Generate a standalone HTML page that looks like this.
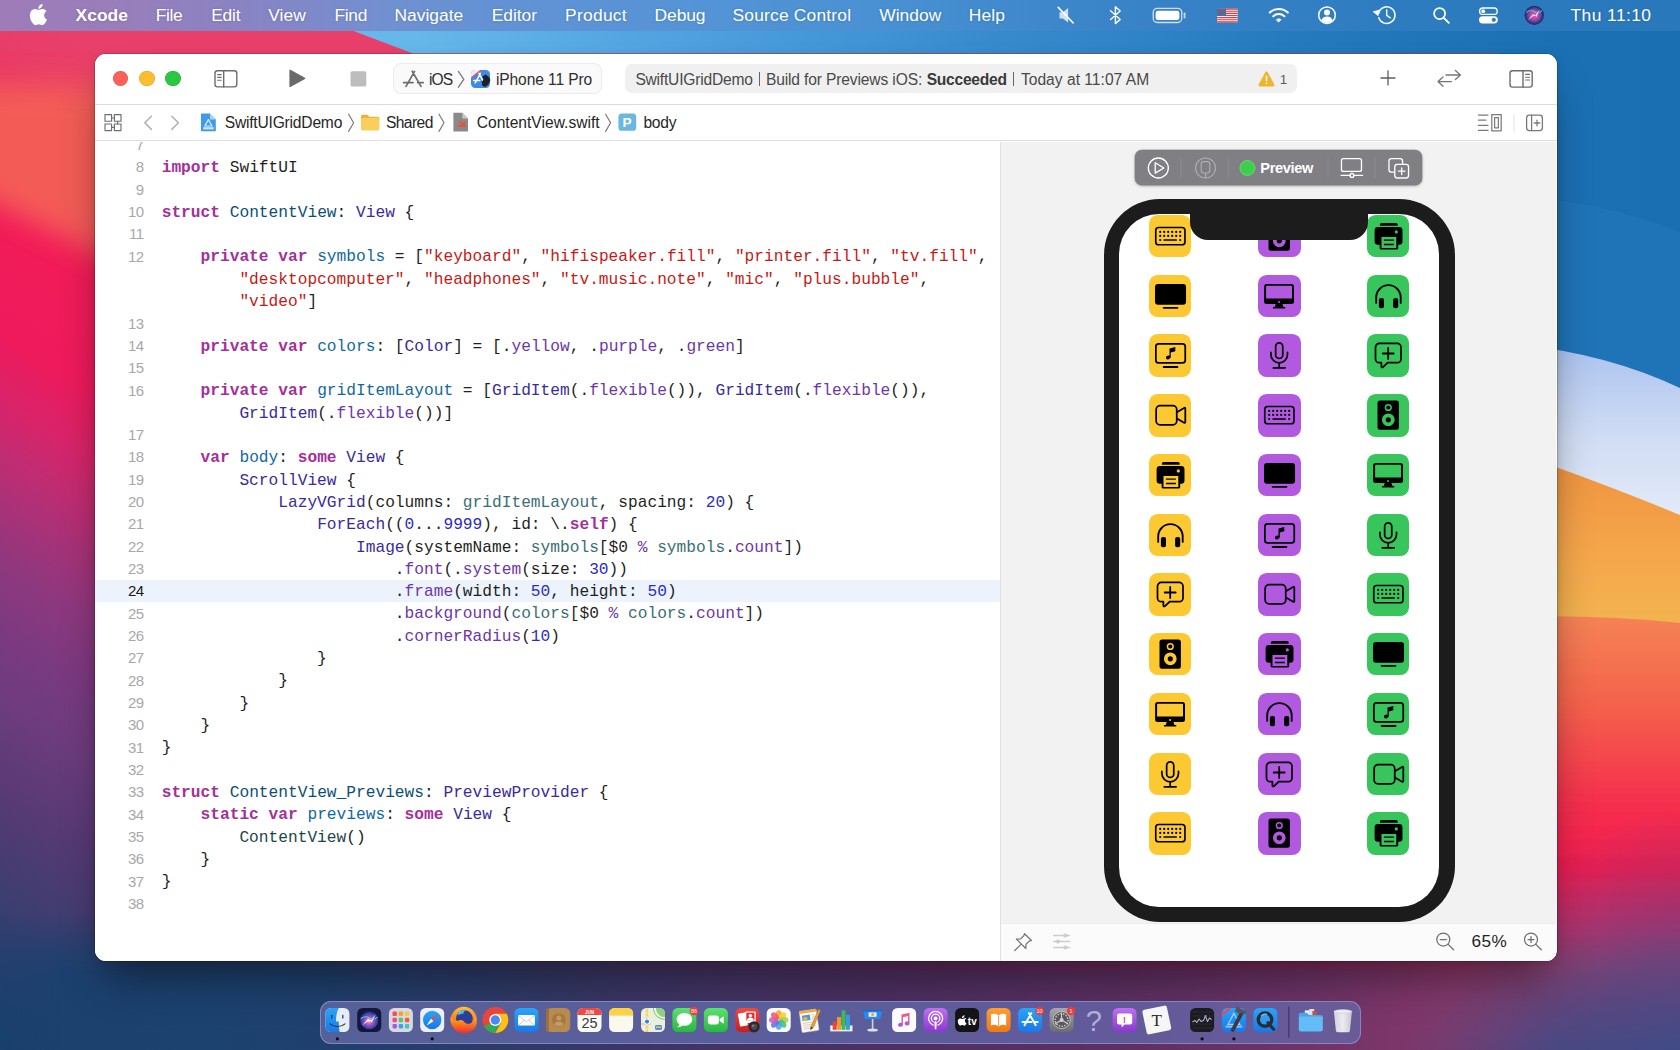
<!DOCTYPE html>
<html lang="en">
<head>
<meta charset="utf-8">
<title>Xcode — SwiftUIGridDemo</title>
<style>
*{box-sizing:border-box;margin:0;padding:0}
html,body{width:1680px;height:1050px;overflow:hidden;background:#1b6fb3;font-family:"Liberation Sans",sans-serif;}
#wall{position:absolute;left:0;top:0;width:1680px;height:1050px;display:block}
/* menu bar */
#menubar{position:absolute;left:0;top:0;width:1680px;height:31px;
 background:linear-gradient(90deg,#9e7cb8 0,#987eba 120px,#8c82c2 220px,#8088c8 300px,#7290d0 380px,#6492d4 480px,#5494d6 700px,#4890d2 900px,#3a84c8 1100px,#2e7cc0 1400px,#2a78bc 1680px);
 color:#fff;font-size:17px;white-space:nowrap}
#menubar span{position:absolute;top:0;line-height:31px;text-shadow:0 0 3px rgba(0,0,0,.18)}
#menubar svg{position:absolute}
/* window */
#win{position:absolute;left:94.700px;top:53.700px;width:1462px;height:907px;border-radius:11px;background:#fff;
 box-shadow:0 0 0 .6px rgba(0,0,0,.30),0 26px 44px -10px rgba(0,0,0,.46),0 2px 8px rgba(0,0,0,.10);overflow:hidden}
#toolbar{position:absolute;left:0;top:0;width:100%;height:51px;background:#fff;border-bottom:1px solid #dcdcdc}
#jump{position:absolute;left:0;top:51px;width:100%;height:36px;background:#fff;border-bottom:1px solid #dedede;font-size:15.6px;color:#262626;white-space:nowrap}
#jump span{position:absolute;top:0;line-height:35px}
.abs{position:absolute}
.tl{position:absolute;top:17px;width:15.8px;height:15.8px;border-radius:50%}
.pill{position:absolute;top:11px;height:29px;border-radius:7px}
/* editor */
#editor{position:absolute;left:0;top:88px;width:905px;height:819px;background:#fff;overflow:hidden}
#rows{position:absolute;left:0;top:-8.700px;width:100%}
.row{position:relative;height:22.333px;line-height:22.333px;white-space:pre;font-family:"Liberation Mono",monospace;font-size:16.2px;color:#1f1f1f}
.row.cur{background:#ecf3fd}
.row.cur .ln{color:#1a1a1a}
.ln{position:absolute;left:0;top:.900px;width:49.400px;text-align:right;font-family:"Liberation Sans",sans-serif;font-size:15px;color:#a8a8a8;letter-spacing:-.5px;padding-right:.5px}
.cd{position:absolute;left:67px;top:1.600px}
.k{color:#a3309a;font-weight:bold}
.t{color:#0b4f79}.d{color:#0f68a0}.c{color:#3b2b9a}.f{color:#6c36a9}.s{color:#c41a16}.n{color:#2a2cc4}.p{color:#3a6e74}.q{color:#1c464a}
/* canvas */
#canvas{position:absolute;left:905px;top:88px;width:556px;height:819px;background:#f2f2f2;border-left:1px solid #e0e0e0}
#cbar{position:absolute;left:0;bottom:0;width:100%;height:36.500px;background:#fbfbfb;box-shadow:0 -1px 0 #ececec}
#ptool{position:absolute;left:134.200px;top:8px;width:286.700px;height:35.400px;border-radius:7px;background:#7f7f84;box-shadow:0 1px 3px rgba(0,0,0,.35),0 0 0 .5px rgba(0,0,0,.25)}
#phone{position:absolute;left:103px;top:57.800px;width:351.800px;height:722.900px;border-radius:56px;background:#1c1c1c}
#screen{position:absolute;left:15px;top:14.200px;width:320.500px;height:693.300px;border-radius:40px;background:#fff;overflow:hidden}
#notch{position:absolute;left:71px;top:-1px;width:178px;height:27px;background:#1c1c1c;border-radius:0 0 18px 18px}
.tile{position:absolute;width:42.3px;height:42.3px;border-radius:8.6px}
.tile svg{position:absolute;left:0;top:0;width:42.3px;height:42.3px;display:block}
.y{background:#fdc932}.pu{background:#b15adf}.g{background:#37c55c}
/* dock */
#dock{position:absolute;left:319.500px;top:1001px;width:1041.500px;height:42.500px;border-radius:11px;background:linear-gradient(90deg,#566098 0,#5a5e9c 40%,#625a9a 75%,#6a5a98 100%);box-shadow:inset 0 0 0 1px rgba(160,168,224,.55)}
</style>
</head>
<body>
<svg id="wall" viewBox="0 0 1680 1050">
<!--WALL0-->
<defs>
 <linearGradient id="gL" x1="0" y1="0" x2="-600" y2="1050" gradientUnits="userSpaceOnUse">
  <stop offset="0.0000" stop-color="#e8406a"/><stop offset="0.0359" stop-color="#e83c68"/><stop offset="0.1544" stop-color="#f21c58"/><stop offset="0.2405" stop-color="#ee1a5c"/><stop offset="0.2908" stop-color="#d8246a"/><stop offset="0.3267" stop-color="#c02c72"/><stop offset="0.3626" stop-color="#a83278"/><stop offset="0.4056" stop-color="#8e387e"/><stop offset="0.4631" stop-color="#783a80"/><stop offset="0.5026" stop-color="#6e3c7e"/><stop offset="0.5744" stop-color="#563a74"/><stop offset="0.6462" stop-color="#3c3e70"/><stop offset="0.7072" stop-color="#20406e"/><stop offset="0.7610" stop-color="#14406c"/><stop offset="1.0051" stop-color="#14406c"/>
 </linearGradient>
 <linearGradient id="gT" x1="413" y1="0" x2="1680" y2="0" gradientUnits="userSpaceOnUse">
  <stop offset="0" stop-color="#66b8ea"/><stop offset=".2" stop-color="#50a2e0"/>
  <stop offset=".45" stop-color="#388cce"/><stop offset=".7" stop-color="#257abe"/>
  <stop offset=".9" stop-color="#1b70b4"/><stop offset="1" stop-color="#1a6eb2"/>
 </linearGradient>
 <linearGradient id="gB" x1="0" y1="0" x2="1680" y2="0" gradientUnits="userSpaceOnUse">
  <stop offset="0" stop-color="#1c406e"/><stop offset=".12" stop-color="#1c4270"/>
  <stop offset=".20" stop-color="#20406e"/><stop offset=".27" stop-color="#2a3c6a"/>
  <stop offset=".34" stop-color="#363866"/><stop offset=".42" stop-color="#423464"/>
  <stop offset=".52" stop-color="#4c3062"/><stop offset=".66" stop-color="#5c3062"/>
  <stop offset=".78" stop-color="#6e3468"/><stop offset=".89" stop-color="#8e386a"/>
  <stop offset=".97" stop-color="#b8386e"/><stop offset="1" stop-color="#c0386e"/>
 </linearGradient>
 <linearGradient id="gBm" x1="0" y1="915" x2="0" y2="975" gradientUnits="userSpaceOnUse">
  <stop offset="0" stop-color="#fff" stop-opacity="0"/><stop offset="1" stop-color="#fff" stop-opacity="1"/>
 </linearGradient>
 <linearGradient id="gBh" x1="-40" y1="0" x2="60" y2="0" gradientUnits="userSpaceOnUse"><stop offset="0" stop-color="#000"/><stop offset="1" stop-color="#000" stop-opacity="0"/></linearGradient>
 <mask id="mB"><rect x="0" y="900" width="1680" height="150" fill="url(#gBm)"/><rect x="0" y="900" width="1680" height="150" fill="url(#gBh)"/></mask>
 <linearGradient id="gLav" x1="0" y1="350" x2="0" y2="520" gradientUnits="userSpaceOnUse">
  <stop offset="0" stop-color="#adc4f0"/><stop offset=".5" stop-color="#d0dcf4"/><stop offset="1" stop-color="#e4ebf8"/>
 </linearGradient>
 <linearGradient id="gOr" x1="0" y1="465" x2="0" y2="625" gradientUnits="userSpaceOnUse">
  <stop offset="0" stop-color="#f09440"/><stop offset=".6" stop-color="#f5a84c"/><stop offset="1" stop-color="#f2b450"/>
 </linearGradient>
 <linearGradient id="gRd" x1="0" y1="618" x2="0" y2="1050" gradientUnits="userSpaceOnUse">
  <stop offset="0" stop-color="#f58254"/><stop offset=".2" stop-color="#f4624c"/>
  <stop offset=".42" stop-color="#f5304e"/><stop offset=".58" stop-color="#f41c50"/>
  <stop offset=".72" stop-color="#cc2e68"/><stop offset=".81" stop-color="#96406e"/>
  <stop offset=".90" stop-color="#6a4478"/><stop offset="1" stop-color="#464a82"/>
 </linearGradient>
 <radialGradient id="gBR" cx="1700" cy="1070" r="260" gradientUnits="userSpaceOnUse">
  <stop offset="0" stop-color="#3c4c8a"/><stop offset=".45" stop-color="#484884" stop-opacity=".8"/><stop offset="1" stop-color="#50407a" stop-opacity="0"/>
 </radialGradient>
 <linearGradient id="gRm" x1="1400" y1="0" x2="1560" y2="0" gradientUnits="userSpaceOnUse"><stop offset="0" stop-color="#fff" stop-opacity="0"/><stop offset="1" stop-color="#fff"/></linearGradient>
 <mask id="mR"><rect x="1300" y="0" width="380" height="1050" fill="url(#gRm)"/></mask>
 <filter id="b12" x="-20%" y="-20%" width="140%" height="140%"><feGaussianBlur stdDeviation="14"/></filter>
 <filter id="b1"><feGaussianBlur stdDeviation=".6"/></filter>
</defs>
<rect width="1680" height="1050" fill="url(#gL)"/>
<path d="M-60 84 L260 84 L260 333 L-60 176 Z" fill="#f45e56" filter="url(#b12)" opacity=".95"/>
<!-- blue top/right -->
<path d="M351 30 L1680 30 L1680 700 L1500 700 L1500 53.5 L413 53.5 Z" fill="url(#gT)"/>
<!-- bottom strip -->
<rect x="0" y="900" width="1680" height="150" fill="url(#gB)" mask="url(#mB)"/>
<g mask="url(#mR)">
<path d="M1300 195 L1500 195 Q1600 200 1680 232 L1680 420 L1300 420 Z" fill="#2176b8" opacity=".75"/>
<path d="M1300 343 L1500 343 Q1600 350 1680 388 L1680 560 L1300 560 Z" fill="url(#gLav)" filter="url(#b1)"/>
<path d="M1300 440 L1500 448 Q1580 474 1680 515 L1680 660 L1300 660 Z" fill="url(#gOr)" filter="url(#b1)"/>
<path d="M1300 617 L1500 617 Q1600 614 1680 623 L1680 1050 L1300 1050 Z" fill="url(#gRd)" filter="url(#b1)"/>
</g>
<rect x="1300" y="760" width="380" height="290" fill="url(#gBR)" opacity=".7"/>
<!--WALL1-->
</svg>

<div id="menubar">
<svg style="left:28.5px;top:3.6px" width="19" height="21" viewBox="2 0 20.2 24"><path fill="#fff" d="M12.152 6.896c-.948 0-2.415-1.078-3.96-1.04-2.04.027-3.91 1.183-4.961 3.014-2.117 3.675-.546 9.103 1.519 12.09 1.013 1.454 2.208 3.09 3.792 3.039 1.52-.065 2.09-.987 3.935-.987 1.831 0 2.35.987 3.96.948 1.637-.026 2.676-1.48 3.676-2.948 1.156-1.688 1.636-3.325 1.662-3.415-.039-.013-3.182-1.221-3.22-4.857-.026-3.04 2.48-4.494 2.597-4.559-1.429-2.09-3.623-2.324-4.39-2.376-2-.156-3.675 1.09-4.61 1.09zM15.53 3.83c.843-1.012 1.4-2.427 1.245-3.83-1.207.052-2.662.805-3.532 1.818-.78.896-1.454 2.338-1.273 3.714 1.338.104 2.715-.688 3.559-1.701"/></svg>
<span style="left:75.5px;font-size:17.4px;font-weight:bold;letter-spacing:0.06px;">Xcode</span>
<span style="left:155.7px;font-size:17.4px;font-weight:normal;letter-spacing:-0.31px;">File</span>
<span style="left:211.2px;font-size:17.4px;font-weight:normal;letter-spacing:-0.17px;">Edit</span>
<span style="left:268.2px;font-size:17.4px;font-weight:normal;letter-spacing:0.05px;">View</span>
<span style="left:334.5px;font-size:17.4px;font-weight:normal;letter-spacing:-0.34px;">Find</span>
<span style="left:394.5px;font-size:17.4px;font-weight:normal;letter-spacing:0.02px;">Navigate</span>
<span style="left:491.7px;font-size:17.4px;font-weight:normal;letter-spacing:-0.02px;">Editor</span>
<span style="left:565.0px;font-size:17.4px;font-weight:normal;letter-spacing:0.29px;">Product</span>
<span style="left:654.5px;font-size:17.4px;font-weight:normal;letter-spacing:-0.05px;">Debug</span>
<span style="left:732.5px;font-size:17.4px;font-weight:normal;letter-spacing:0.20px;">Source Control</span>
<span style="left:879.2px;font-size:17.4px;font-weight:normal;letter-spacing:0.04px;">Window</span>
<span style="left:968.7px;font-size:17.4px;font-weight:normal;letter-spacing:0.13px;">Help</span>
<span style="left:1570.5px;font-size:17.4px;font-weight:normal;letter-spacing:0.44px;">Thu 11:10</span>
<svg style="left:1040px;top:0" width="520" height="31" viewBox="1040 0 520 31" fill="none" stroke="#fff" stroke-width="1.5" stroke-linecap="round" stroke-linejoin="round">
 <!-- mute -->
 <path d="M1059.5 12.2h3.4l5.2-4.2v14.6l-5.2-4.2h-3.4z" fill="#fff" stroke="none" opacity=".75"/>
 <path d="M1058.2 7.4l15 15.6" stroke-width="1.6"/>
 <!-- bluetooth -->
 <path d="M1110.6 10.8l9.6 8.6-4.8 4.2V6.8l4.8 4.2-9.6 8.6" stroke-width="1.4"/>
 <!-- battery -->
 <rect x="1153.2" y="8.3" width="28.6" height="14.2" rx="4.2" stroke-width="1.3" opacity=".75"/>
 <rect x="1155.6" y="10.7" width="23.8" height="9.4" rx="2.3" fill="#fff" stroke="none"/>
 <path d="M1184.6 13.3v4.2" stroke-width="1.8" opacity=".7"/>
 <!-- flag -->
 <g stroke="none"><rect x="1217" y="8.6" width="20.6" height="13.8" fill="#f4f2f2"/>
 <path d="M1217 8.6h20.6v1.06H1217zM1217 10.72h20.6v1.06H1217zM1217 12.84h20.6v1.06H1217zM1217 14.96h20.6v1.06H1217zM1217 17.08h20.6v1.06H1217zM1217 19.2h20.6v1.06H1217zM1217 21.32h20.6v1.08H1217z" fill="#d8404c"/>
 <rect x="1217" y="8.6" width="9" height="7.4" fill="#5a6898"/></g>
 <!-- wifi -->
 <path d="M1269.8 12.6a13.2 13.2 0 0 1 18 0" stroke-width="2.1"/>
 <path d="M1273.2 16.2a8.4 8.4 0 0 1 11.2 0" stroke-width="2.1"/>
 <path d="M1276.6 19.6a3.4 3.4 0 0 1 4.4 0l-2.2 2.3z" fill="#fff" stroke-width=".8"/>
 <!-- user -->
 <circle cx="1327" cy="15.2" r="8.3" stroke-width="1.5"/>
 <circle cx="1327" cy="12.4" r="3" fill="#fff" stroke="none"/>
 <path d="M1321.4 20.6a5.8 5.4 0 0 1 11.2 0a8 8 0 0 1-11.2 0z" fill="#fff" stroke="none"/>
 <!-- time machine -->
 <path d="M1378.6 13.2a8.3 8.3 0 1 1 .2 4.6" stroke-width="1.5"/>
 <path d="M1372.6 11.6l5.6 4.6 2-6.6z" fill="#fff" stroke="none"/>
 <path d="M1386.7 10v5.4l3.6 2.4" stroke-width="1.4"/>
 <!-- search -->
 <circle cx="1439.6" cy="13.6" r="5.5" stroke-width="1.7"/><path d="M1443.8 17.8l5 5" stroke-width="1.9"/>
 <!-- control center -->
 <rect x="1479.6" y="8" width="17.6" height="6.4" rx="3.2" stroke-width="1.3"/><circle cx="1483.2" cy="11.2" r="1.9" fill="#fff" stroke="none"/>
 <rect x="1479" y="16.2" width="18.8" height="7.2" rx="3.6" fill="#fff" stroke="none"/><circle cx="1493.8" cy="19.8" r="2.1" fill="#3c7ab4" stroke="none"/>
 <!-- siri -->
 <defs><radialGradient id="siri" cx=".5" cy=".5" r=".5"><stop offset="0" stop-color="#e05a9a"/><stop offset=".45" stop-color="#b04aa8"/><stop offset=".8" stop-color="#3a3c90"/><stop offset="1" stop-color="#20205a"/></radialGradient></defs>
 <circle cx="1534.3" cy="15.3" r="9.6" fill="url(#siri)" stroke="none"/>
 <path d="M1527.8 20.4l5.4-6.4 1.4 2.4 5.2-7.2-3.4 7.8-1.6-2.4z" fill="#fff" stroke="none" opacity=".95"/>
 <path d="M1526.6 12.2q4 -3.2 8 -.4t7 -1" stroke="#5ad0e0" stroke-width="1.1" opacity=".8"/>
</svg>

</div>

<div id="win">
 <div id="toolbar">
  <div class="tl" style="left:18px;background:#fe5f57;box-shadow:inset 0 0 0 .6px rgba(0,0,0,.14)"></div>
  <div class="tl" style="left:44.2px;background:#febc2e;box-shadow:inset 0 0 0 .6px rgba(0,0,0,.14)"></div>
  <div class="tl" style="left:70.4px;background:#28c840;box-shadow:inset 0 0 0 .6px rgba(0,0,0,.14)"></div>
  <div class="pill" style="left:299.5px;top:10.5px;width:207px;height:28.5px;background:#fafafa;box-shadow:0 0 0 1px #ebebeb"></div>
  <div class="pill" style="left:530px;top:10.5px;width:672px;height:28.5px;background:#f0f0f0"></div>
  <svg class="abs" style="left:0;top:0" width="1461" height="51" viewBox="95 54 1461 51" fill="none" stroke="#6c6c6c" stroke-width="1.4" stroke-linecap="round" stroke-linejoin="round">
   <!-- sidebar toggle -->
   <rect x="215" y="70.7" width="21.8" height="16.2" rx="2.6"/><path d="M223.7 70.7v16.2" /><path d="M217.6 74.6h3.6M217.6 77.4h3.6M217.6 80.2h3.6" stroke-width="1.1"/>
   <!-- play -->
   <path d="M289.4 70.2v16.4a.7.7 0 0 0 1 .5l14.6-8.1a.7.7 0 0 0 0-1.2l-14.6-8.1a.7.7 0 0 0-1 .5z" fill="#6a6a6a" stroke="none"/>
   <!-- stop -->
   <rect x="350.5" y="71.2" width="15.8" height="15.2" rx="1.6" fill="#bdbdbd" stroke="none"/>
   <!-- scheme A icon -->
   <g stroke="#6e6e6e" stroke-width="1.7"><path d="M414.6 71.4l-8.6 15M412.2 71.2l8.8 15.2M403.6 82.6h9.4M417.6 82.6h5.6"/></g>
   <!-- chevron -->
   <path d="M458.4 71.4l5.4 7.9-5.4 7.9" stroke="#7a7a7a" stroke-width="1.3"/>
   <!-- simulator icon -->
   <g stroke="none"><rect x="471" y="70" width="19" height="18" rx="4.2" fill="#3f8ae6"/>
   <path d="M471 78l10-8h-5.8a4.2 4.2 0 0 0-4.2 4.2z" fill="#e9eefb"/><path d="M472 77.4l8.6-6.8" stroke="#e05a6a" stroke-width="1.6"/>
   <path d="M480.4 73.4l-5.2 9.6M479 73.4l5 9.6M473.8 80.6h6" stroke="#fff" stroke-width="1.5" stroke-linecap="round"/>
   <path d="M482.2 76.8l3.4-2.4 3.4 2.6 1.4 3-2 4.6-3.2 2.4-3-1.6-.4-3.6 1.8-2.2z" fill="#1f1f22"/></g>
   <!-- warning -->
   <path d="M1265.6 72.4a1 1 0 0 1 1.8 0l6.6 12.2a1 1 0 0 1-.9 1.5h-13.2a1 1 0 0 1-.9-1.5z" fill="#f0b429" stroke="#f0b429" stroke-width=".8"/>
   <path d="M1266.5 76.2v4.6" stroke="#fff" stroke-width="1.5"/><circle cx="1266.5" cy="83.3" r=".9" fill="#fff" stroke="none"/>
   <!-- plus -->
   <path d="M1381 78h14M1388 71v14" stroke="#5c5c5c" stroke-width="1.3"/>
   <!-- arrows -->
   <path d="M1446 75h14.4M1455.4 70.4l5 4.6-5 4.6M1451.4 81.6H1438M1443 77l-5 4.6 5 4.6" stroke="#757575" stroke-width="1.3"/>
   <!-- right sidebar -->
   <rect x="1510" y="70.7" width="22.2" height="16.4" rx="2.6"/><path d="M1523 70.7v16.4"/><path d="M1525.6 74.4h4M1525.6 77.2h4M1525.6 80h4" stroke-width="1.1"/>
  </svg>
  <div style="position:absolute;left:0;top:0;font-size:15.4px;color:#3c3c3c;white-space:nowrap" id="tbtext">
  <span style="left:334.2px;font-size:15.6px;font-weight:normal;letter-spacing:-0.80px;top:11px;line-height:29px;position:absolute;color:#2e2e2e">iOS</span>
  <span style="left:401.2px;font-size:15.6px;font-weight:normal;letter-spacing:-0.11px;top:11px;line-height:29px;position:absolute;color:#2e2e2e">iPhone 11 Pro</span>
  <span style="left:540.7px;font-size:15.6px;font-weight:normal;letter-spacing:-0.21px;top:11px;line-height:29px;position:absolute;color:#4a4a4a">SwiftUIGridDemo</span>
  <span style="position:absolute;left:664.3px;top:18.500px;width:1.200px;height:13.500px;background:#666"></span>
  <span style="left:671.2px;font-size:15.6px;font-weight:normal;letter-spacing:-0.14px;top:11px;line-height:29px;position:absolute;color:#4a4a4a">Build for Previews iOS:</span>
  <span style="left:832.0px;font-size:15.6px;font-weight:bold;letter-spacing:-0.26px;top:11px;line-height:29px;position:absolute;color:#3a3a3a">Succeeded</span>
  <span style="position:absolute;left:918.2px;top:18.500px;width:1.200px;height:13.500px;background:#666"></span>
  <span style="left:926.2px;font-size:15.6px;font-weight:normal;letter-spacing:0.02px;top:11px;line-height:29px;position:absolute;color:#4a4a4a">Today at 11:07 AM</span>
  <span style="left:1185.0px;font-size:13.4px;font-weight:normal;letter-spacing:-0.80px;top:11.5px;line-height:29px;position:absolute;color:#5c5c5c">1</span>
  </div>

 </div>
 <div id="jump">
  <svg class="abs" style="left:0;top:0" width="1461" height="36" viewBox="95 105 1461 36" fill="none" stroke="#7a7a7a" stroke-width="1.2" stroke-linecap="round" stroke-linejoin="round">
   <!-- related items grid -->
   <g stroke="#6e6e6e" stroke-width="1.15"><rect x="105" y="114.6" width="6.6" height="6.6"/><rect x="114.4" y="114.6" width="6.6" height="6.6"/><rect x="105" y="124" width="6.6" height="6.6"/><rect x="114.4" y="124" width="6.6" height="6.6"/><path d="M111.6 118h2.8M117.6 121.2v2.8M111.6 127.4h2.8"/></g>
   <path d="M151.4 116.2l-6.6 6.6 6.6 6.6" stroke="#b0b0b0" stroke-width="1.5"/>
   <path d="M171.8 116.2l6.6 6.6-6.6 6.6" stroke="#b0b0b0" stroke-width="1.5"/>
   <!-- project doc -->
   <g stroke="none"><path d="M201 113.6h9l5.8 5.8v11.8h-14.8z" fill="#3f9be8"/><path d="M210 113.6v5.8h5.8z" fill="#a8d2f7"/>
   <path d="M208.4 119.6l-3.6 6.4h7.2z" fill="none" stroke="#dff0ff" stroke-width="1.2"/><rect x="203.2" y="127.2" width="10.4" height="2.2" fill="#d0e8fb"/></g>
   <path d="M348.6 114.2l5 8.6-5 8.6" stroke="#7c7c7c" stroke-width="1.2"/>
   <!-- folder -->
   <g stroke="none"><path d="M361 116.4a1.6 1.6 0 0 1 1.6-1.6h4.8l2 2h8.4a1.6 1.6 0 0 1 1.6 1.6v2H361z" fill="#e8b23c"/><rect x="361" y="117.8" width="18.4" height="12.8" rx="1.6" fill="#f8cf5a"/></g>
   <path d="M439 114.2l5 8.6-5 8.6" stroke="#7c7c7c" stroke-width="1.2"/>
   <!-- swift file -->
   <g stroke="none"><path d="M453.4 112.8h9l5.6 5.6v13.2h-14.6z" fill="#8a8a8a"/><path d="M462.4 112.8v5.6h5.6z" fill="#c8c8c8"/>
   <path d="M456 124.2c2.400 2.600 5.600 3.800 8 2.600 1.200-.6 1.800 1.200 1.800 1.200s.4-2.400-.8-3.800c.8-2 -.6-4.200-.6-4.200s.2 2.200-.8 3.200c-1.600-1-3.600-2.800-4.600-4 .8 1.400 2.200 3.200 3.400 4.400-1.600-.8-3.800-2.400-5.200-3.600 1.200 1.800 3 3.600 4.600 4.800-1.800.6-4 .2-5.800-.6z" fill="#e8503a"/></g>
   <path d="M605.600 114.200l5 8.600-5 8.600" stroke="#7c7c7c" stroke-width="1.200"/>
   <!-- P icon -->
   <rect x="618.400" y="113.400" width="17.800" height="17.400" rx="3.400" fill="#6cb6e2" stroke="none"/>
   <!-- right icons -->
   <g stroke="#7a7a7a" stroke-width="1.25"><path d="M1478.400 115h9.600M1478.400 120h7.600M1478.400 125.300h9.600M1478.400 130.400h9.600"/><rect x="1491.800" y="114.600" width="9.400" height="16.200"/><rect x="1494.600" y="117.600" width="3.800" height="10.200"/></g>
   <path d="M1514 114.400v16.800" stroke="#e2e2e2" stroke-width="1"/>
   <g stroke="#7a7a7a" stroke-width="1.3"><rect x="1526.600" y="115.200" width="15.800" height="15.400" rx="2.800"/><path d="M1531.600 115.200v15.400M1534.200 123h5.600M1537 120.200v5.600"/></g>
  </svg>
  <span style="left:527.7px;font-size:13.6px;font-weight:bold;letter-spacing:0.42px;color:#fff;line-height:35px">P</span>
  <span style="left:130.0px;font-size:15.6px;font-weight:normal;letter-spacing:-0.20px;">SwiftUIGridDemo</span>
  <span style="left:291.2px;font-size:15.6px;font-weight:normal;letter-spacing:-0.55px;">Shared</span>
  <span style="left:382.0px;font-size:15.6px;font-weight:normal;letter-spacing:0.01px;">ContentView.swift</span>
  <span style="left:548.7px;font-size:15.6px;font-weight:normal;letter-spacing:-0.21px;">body</span>

 </div>
 <div id="editor"><div id="rows">
<div class="row"><span class="ln">7</span><span class="cd"></span></div>
<div class="row"><span class="ln">8</span><span class="cd"><span class="k">import</span> SwiftUI</span></div>
<div class="row"><span class="ln">9</span><span class="cd"></span></div>
<div class="row"><span class="ln">10</span><span class="cd"><span class="k">struct</span> <span class="t">ContentView</span>: <span class="c">View</span> {</span></div>
<div class="row"><span class="ln">11</span><span class="cd"></span></div>
<div class="row"><span class="ln">12</span><span class="cd">    <span class="k">private</span> <span class="k">var</span> <span class="d">symbols</span> = [<span class="s">"keyboard"</span>, <span class="s">"hifispeaker.fill"</span>, <span class="s">"printer.fill"</span>, <span class="s">"tv.fill"</span>,</span></div>
<div class="row"><span class="ln"></span><span class="cd">        <span class="s">"desktopcomputer"</span>, <span class="s">"headphones"</span>, <span class="s">"tv.music.note"</span>, <span class="s">"mic"</span>, <span class="s">"plus.bubble"</span>,</span></div>
<div class="row"><span class="ln"></span><span class="cd">        <span class="s">"video"</span>]</span></div>
<div class="row"><span class="ln">13</span><span class="cd"></span></div>
<div class="row"><span class="ln">14</span><span class="cd">    <span class="k">private</span> <span class="k">var</span> <span class="d">colors</span>: [<span class="c">Color</span>] = [.<span class="f">yellow</span>, .<span class="f">purple</span>, .<span class="f">green</span>]</span></div>
<div class="row"><span class="ln">15</span><span class="cd"></span></div>
<div class="row"><span class="ln">16</span><span class="cd">    <span class="k">private</span> <span class="k">var</span> <span class="d">gridItemLayout</span> = [<span class="c">GridItem</span>(.<span class="f">flexible</span>()), <span class="c">GridItem</span>(.<span class="f">flexible</span>()),</span></div>
<div class="row"><span class="ln"></span><span class="cd">        <span class="c">GridItem</span>(.<span class="f">flexible</span>())]</span></div>
<div class="row"><span class="ln">17</span><span class="cd"></span></div>
<div class="row"><span class="ln">18</span><span class="cd">    <span class="k">var</span> <span class="d">body</span>: <span class="k">some</span> <span class="c">View</span> {</span></div>
<div class="row"><span class="ln">19</span><span class="cd">        <span class="c">ScrollView</span> {</span></div>
<div class="row"><span class="ln">20</span><span class="cd">            <span class="c">LazyVGrid</span>(columns: <span class="p">gridItemLayout</span>, spacing: <span class="n">20</span>) {</span></div>
<div class="row"><span class="ln">21</span><span class="cd">                <span class="c">ForEach</span>((<span class="n">0</span>...<span class="n">9999</span>), id: \.<span class="k">self</span>) {</span></div>
<div class="row"><span class="ln">22</span><span class="cd">                    <span class="c">Image</span>(systemName: <span class="p">symbols</span>[$0 <span class="f">%</span> <span class="p">symbols</span>.<span class="f">count</span>])</span></div>
<div class="row"><span class="ln">23</span><span class="cd">                        .<span class="f">font</span>(.<span class="f">system</span>(size: <span class="n">30</span>))</span></div>
<div class="row cur"><span class="ln">24</span><span class="cd">                        .<span class="f">frame</span>(width: <span class="n">50</span>, height: <span class="n">50</span>)</span></div>
<div class="row"><span class="ln">25</span><span class="cd">                        .<span class="f">background</span>(<span class="p">colors</span>[$0 <span class="f">%</span> <span class="p">colors</span>.<span class="f">count</span>])</span></div>
<div class="row"><span class="ln">26</span><span class="cd">                        .<span class="f">cornerRadius</span>(<span class="n">10</span>)</span></div>
<div class="row"><span class="ln">27</span><span class="cd">                }</span></div>
<div class="row"><span class="ln">28</span><span class="cd">            }</span></div>
<div class="row"><span class="ln">29</span><span class="cd">        }</span></div>
<div class="row"><span class="ln">30</span><span class="cd">    }</span></div>
<div class="row"><span class="ln">31</span><span class="cd">}</span></div>
<div class="row"><span class="ln">32</span><span class="cd"></span></div>
<div class="row"><span class="ln">33</span><span class="cd"><span class="k">struct</span> <span class="t">ContentView_Previews</span>: <span class="c">PreviewProvider</span> {</span></div>
<div class="row"><span class="ln">34</span><span class="cd">    <span class="k">static</span> <span class="k">var</span> <span class="d">previews</span>: <span class="k">some</span> <span class="c">View</span> {</span></div>
<div class="row"><span class="ln">35</span><span class="cd">        <span class="q">ContentView</span>()</span></div>
<div class="row"><span class="ln">36</span><span class="cd">    }</span></div>
<div class="row"><span class="ln">37</span><span class="cd">}</span></div>
<div class="row"><span class="ln">38</span><span class="cd"></span></div>
 </div></div>
 <div id="canvas">
  <div id="ptool">
   <svg class="abs" style="left:0;top:0" width="286.700" height="35.400" viewBox="1135.200 150 286.700 35.400" fill="none" stroke="#fff" stroke-width="1.350" stroke-linecap="round" stroke-linejoin="round">
    <circle cx="1158.500" cy="168" r="10"/><path d="M1155.400 162.800v10.400l8.600-5.200z"/>
    <path d="M1181.300 158v20M1228.600 158v20M1328.200 158v20M1375.200 158v20" stroke="#8c8c91" stroke-width="1"/>
    <g stroke="#aeaeb2" stroke-width="1.200"><circle cx="1205.700" cy="168" r="10"/><rect x="1201.400" y="161.600" width="8.600" height="11.400" rx="2.400"/><path d="M1205.700 173v4.400"/></g>
    <circle cx="1247.600" cy="168" r="7.500" fill="#3bcf4d" stroke="#6fe07c" stroke-width=".8"/>
    <rect x="1341.700" y="158.600" width="20" height="12.800" rx="2"/><path d="M1341.400 175.400h8.400M1354.800 175.400h8"/><circle cx="1352.200" cy="175.400" r="1.900"/>
    <rect x="1389.200" y="158.600" width="13.600" height="13.600" rx="2.400"/><rect x="1395" y="164.400" width="13.800" height="13.600" rx="2.400" fill="#7f7f84"/><path d="M1398.600 171.200h6.600M1401.900 167.900v6.600"/>
   </svg>
   <span style="position:absolute;left:0;top:0;color:#fff;font-size:15.600px;white-space:nowrap"><span style="left:125.4px;font-size:14.6px;font-weight:bold;letter-spacing:-0.35px;position:absolute;top:0;line-height:36px;font-weight:bold">Preview</span></span>

  </div>
  <div id="phone"><div id="screen">
<div class="tile y" style="left:30.4px;top:1.4px"><svg viewBox="0 0 42.3 42.3"><use href="#i-keyboard"/></svg></div>
<div class="tile pu" style="left:139.7px;top:1.4px"><svg viewBox="0 0 42.3 42.3"><use href="#i-hifispeaker"/></svg></div>
<div class="tile g" style="left:248.3px;top:1.4px"><svg viewBox="0 0 42.3 42.3"><use href="#i-printer"/></svg></div>
<div class="tile y" style="left:30.4px;top:61.1px"><svg viewBox="0 0 42.3 42.3"><use href="#i-tv"/></svg></div>
<div class="tile pu" style="left:139.7px;top:61.1px"><svg viewBox="0 0 42.3 42.3"><use href="#i-desktop"/></svg></div>
<div class="tile g" style="left:248.3px;top:61.1px"><svg viewBox="0 0 42.3 42.3"><use href="#i-headphones"/></svg></div>
<div class="tile y" style="left:30.4px;top:120.8px"><svg viewBox="0 0 42.3 42.3"><use href="#i-tvmusic"/></svg></div>
<div class="tile pu" style="left:139.7px;top:120.8px"><svg viewBox="0 0 42.3 42.3"><use href="#i-mic"/></svg></div>
<div class="tile g" style="left:248.3px;top:120.8px"><svg viewBox="0 0 42.3 42.3"><use href="#i-plusbubble"/></svg></div>
<div class="tile y" style="left:30.4px;top:180.6px"><svg viewBox="0 0 42.3 42.3"><use href="#i-video"/></svg></div>
<div class="tile pu" style="left:139.7px;top:180.6px"><svg viewBox="0 0 42.3 42.3"><use href="#i-keyboard"/></svg></div>
<div class="tile g" style="left:248.3px;top:180.6px"><svg viewBox="0 0 42.3 42.3"><use href="#i-hifispeaker"/></svg></div>
<div class="tile y" style="left:30.4px;top:240.3px"><svg viewBox="0 0 42.3 42.3"><use href="#i-printer"/></svg></div>
<div class="tile pu" style="left:139.7px;top:240.3px"><svg viewBox="0 0 42.3 42.3"><use href="#i-tv"/></svg></div>
<div class="tile g" style="left:248.3px;top:240.3px"><svg viewBox="0 0 42.3 42.3"><use href="#i-desktop"/></svg></div>
<div class="tile y" style="left:30.4px;top:300.0px"><svg viewBox="0 0 42.3 42.3"><use href="#i-headphones"/></svg></div>
<div class="tile pu" style="left:139.7px;top:300.0px"><svg viewBox="0 0 42.3 42.3"><use href="#i-tvmusic"/></svg></div>
<div class="tile g" style="left:248.3px;top:300.0px"><svg viewBox="0 0 42.3 42.3"><use href="#i-mic"/></svg></div>
<div class="tile y" style="left:30.4px;top:359.7px"><svg viewBox="0 0 42.3 42.3"><use href="#i-plusbubble"/></svg></div>
<div class="tile pu" style="left:139.7px;top:359.7px"><svg viewBox="0 0 42.3 42.3"><use href="#i-video"/></svg></div>
<div class="tile g" style="left:248.3px;top:359.7px"><svg viewBox="0 0 42.3 42.3"><use href="#i-keyboard"/></svg></div>
<div class="tile y" style="left:30.4px;top:419.4px"><svg viewBox="0 0 42.3 42.3"><use href="#i-hifispeaker"/></svg></div>
<div class="tile pu" style="left:139.7px;top:419.4px"><svg viewBox="0 0 42.3 42.3"><use href="#i-printer"/></svg></div>
<div class="tile g" style="left:248.3px;top:419.4px"><svg viewBox="0 0 42.3 42.3"><use href="#i-tv"/></svg></div>
<div class="tile y" style="left:30.4px;top:479.2px"><svg viewBox="0 0 42.3 42.3"><use href="#i-desktop"/></svg></div>
<div class="tile pu" style="left:139.7px;top:479.2px"><svg viewBox="0 0 42.3 42.3"><use href="#i-headphones"/></svg></div>
<div class="tile g" style="left:248.3px;top:479.2px"><svg viewBox="0 0 42.3 42.3"><use href="#i-tvmusic"/></svg></div>
<div class="tile y" style="left:30.4px;top:538.9px"><svg viewBox="0 0 42.3 42.3"><use href="#i-mic"/></svg></div>
<div class="tile pu" style="left:139.7px;top:538.9px"><svg viewBox="0 0 42.3 42.3"><use href="#i-plusbubble"/></svg></div>
<div class="tile g" style="left:248.3px;top:538.9px"><svg viewBox="0 0 42.3 42.3"><use href="#i-video"/></svg></div>
<div class="tile y" style="left:30.4px;top:598.6px"><svg viewBox="0 0 42.3 42.3"><use href="#i-keyboard"/></svg></div>
<div class="tile pu" style="left:139.7px;top:598.6px"><svg viewBox="0 0 42.3 42.3"><use href="#i-hifispeaker"/></svg></div>
<div class="tile g" style="left:248.3px;top:598.6px"><svg viewBox="0 0 42.3 42.3"><use href="#i-printer"/></svg></div>
   <div id="notch"></div>
  </div></div>
  <div id="cbar">
   <svg class="abs" style="left:-1px;top:0" width="556" height="36" viewBox="1000 924.500 556 36" fill="none" stroke="#6e6e6e" stroke-width="1.250" stroke-linecap="round" stroke-linejoin="round">
    <!-- pin -->
    <path d="M1024.600 934.200l6.800 6.800-2.200.6-3.200 3.200-.2 4.200-9.400-9.400 4.200-.2 3.200-3.200zM1021.200 944.600l-6.400 6.400" stroke="#757575"/>
    <!-- sliders -->
    <g stroke="#cdcdcd" stroke-width="1.300"><path d="M1053.600 936h16M1053.600 942h16M1053.600 948h16"/><circle cx="1065.400" cy="936" r="1.400" fill="#cdcdcd"/><circle cx="1058" cy="942" r="1.400" fill="#cdcdcd"/><circle cx="1065.400" cy="948" r="1.400" fill="#cdcdcd"/></g>
    <!-- zoom out -->
    <circle cx="1443.300" cy="940" r="6.500"/><path d="M1448.200 944.900l5.400 5.400M1440.300 940h6"/>
    <!-- zoom in -->
    <circle cx="1531" cy="940" r="6.500"/><path d="M1535.900 944.900l5.400 5.400M1528 940h6M1531 937v6"/>
   </svg>
   <span style="position:absolute;left:0;top:0;white-space:nowrap;color:#242424"><span style="left:470.7px;font-size:17.2px;font-weight:normal;letter-spacing:0.53px;position:absolute;top:0;line-height:34.500px">65%</span></span>

  </div>
 </div>
</div>

<div id="dock">
<svg class="abs" style="left:0;top:0;overflow:visible" width="1042" height="43" viewBox="319.5 1001 1042 43">
<defs>
<linearGradient id="dg-blue" x1="0" y1="0" x2="0" y2="1"><stop offset="0" stop-color="#2aa4f6"/><stop offset="1" stop-color="#1a78ea"/></linearGradient>
<linearGradient id="dg-green" x1="0" y1="0" x2="0" y2="1"><stop offset="0" stop-color="#5ee070"/><stop offset="1" stop-color="#28b83e"/></linearGradient>
<linearGradient id="dg-purple" x1="0" y1="0" x2="0" y2="1"><stop offset="0" stop-color="#c070ee"/><stop offset="1" stop-color="#8a38d0"/></linearGradient>
<linearGradient id="dg-orange" x1="0" y1="0" x2="0" y2="1"><stop offset="0" stop-color="#fca030"/><stop offset="1" stop-color="#f07a14"/></linearGradient>
<linearGradient id="dg-red" x1="0" y1="0" x2="0" y2="1"><stop offset="0" stop-color="#f04a3c"/><stop offset="1" stop-color="#c81e22"/></linearGradient>
<linearGradient id="dg-grey" x1="0" y1="0" x2="0" y2="1"><stop offset="0" stop-color="#a8a8ac"/><stop offset="1" stop-color="#6c6c70"/></linearGradient>
<linearGradient id="dg-ff" x1="0" y1="0" x2="0" y2="1"><stop offset="0" stop-color="#ffc030"/><stop offset=".5" stop-color="#ff7a1a"/><stop offset="1" stop-color="#e8303a"/></linearGradient>
<radialGradient id="dg-siri" cx=".5" cy=".55" r=".5"><stop offset="0" stop-color="#f6e8f4"/><stop offset=".25" stop-color="#e06aa8"/><stop offset=".55" stop-color="#8a4ac0"/><stop offset=".85" stop-color="#2c4aa8"/><stop offset="1" stop-color="#1a2260"/></radialGradient>
<linearGradient id="dg-music" x1="0" y1="0" x2="0" y2="1"><stop offset="0" stop-color="#fa5a78"/><stop offset="1" stop-color="#a058e8"/></linearGradient>
<linearGradient id="dg-trash" x1="0" y1="0" x2="1" y2="0"><stop offset="0" stop-color="#dcdce2"/><stop offset=".5" stop-color="#f8f8fa"/><stop offset="1" stop-color="#cfcfd6"/></linearGradient>
</defs>
<g transform="translate(324.90 1008)"><rect width="24" height="24" rx="5.4" fill="#e6ecf2" /><path d="M0 5.400A5.400 5.400 0 0 1 5.400 0H13.400C11.400 4 10.400 9 10.600 13.600H13.400C13.200 17 13.600 21 14.400 24H5.400A5.400 5.400 0 0 1 0 18.600z" fill="url(#dg-blue)"/><path d="M6.400 7.400v2.600M17.400 7.400v2.600" stroke="#1e2c48" stroke-width="1.200" stroke-linecap="round"/><path d="M4.600 15.800c4 3.600 11 3.600 15 0" stroke="#1e2c48" stroke-width="1.100" fill="none" stroke-linecap="round"/></g>
<circle cx="336.9" cy="1038.800" r="1.600" fill="#0a0a14"/>
<g transform="translate(356.75 1008)"><rect width="24" height="24" rx="5.4" fill="#15163a" /><circle cx="12" cy="12" r="9.300" fill="url(#dg-siri)"/><path d="M5 17.400l6-7 1.800 3 5.600-7.400-3.800 8.600-1.800-2.800z" fill="#fff" opacity=".95"/><path d="M3.400 10.600q4.400-3.400 8.600-.6t8.400-1.200" stroke="#5ad8e8" stroke-width="1.100" fill="none" opacity=".85"/></g>
<g transform="translate(388.40 1008)"><rect width="24" height="24" rx="5.4" fill="#d9d9e2" /><rect x="3.6" y="3.6" width="4.400" height="4.400" rx="1.100" fill="#f0524a"/><rect x="9.8" y="3.6" width="4.400" height="4.400" rx="1.100" fill="#f8a030"/><rect x="16.0" y="3.6" width="4.400" height="4.400" rx="1.100" fill="#f8c83a"/><rect x="3.6" y="9.8" width="4.400" height="4.400" rx="1.100" fill="#e84a8a"/><rect x="9.8" y="9.8" width="4.400" height="4.400" rx="1.100" fill="#58c860"/><rect x="16.0" y="9.8" width="4.400" height="4.400" rx="1.100" fill="#f05a4a"/><rect x="3.6" y="16.0" width="4.400" height="4.400" rx="1.100" fill="#a05ae0"/><rect x="9.8" y="16.0" width="4.400" height="4.400" rx="1.100" fill="#3aa0f0"/><rect x="16.0" y="16.0" width="4.400" height="4.400" rx="1.100" fill="#40c8c0"/></g>
<g transform="translate(419.70 1008)"><rect width="24" height="24" rx="5.4" fill="#eef0f6" /><circle cx="12" cy="12" r="9.200" fill="url(#dg-blue)"/><path d="M17.600 6.400l-4.400 6.800-2.400-2.400z" fill="#f04a3c"/><path d="M6.400 17.600l4.400-6.800 2.400 2.400z" fill="#fff"/></g>
<circle cx="431.7" cy="1038.800" r="1.600" fill="#0a0a14"/>
<g transform="translate(451.30 1008)"><circle cx="12" cy="12" r="13.200" fill="url(#dg-ff)"/><circle cx="12.600" cy="10.600" r="8.400" fill="#2a3f9a"/><path d="M-1 9c1.400 3 5 4.600 8 3.400 2.600-1 4.200-.4 5.600 1.600 1.600 2.200 5 2.600 7.400.8 2.600-2 3-5.400 1.600-8 4 3.600 4.400 10.400.4 14.400-4.400 4.400-12 4.800-17 1S-2.200 13-1 9z" fill="url(#dg-ff)"/><path d="M6.400 4.400c2-1.800 5-2.600 7.600-1.800-1.600.6-2.400 1.800-2.400 3.200-2-.2-3.600.4-5.200 1.600z" fill="#5ab8f0"/></g>
<g transform="translate(482.80 1008)"><circle cx="12" cy="12" r="13" fill="#e8453a"/><path d="M12 12L.75 18.500A13 13 0 0 0 12 25l5.600-9.800z" fill="#34a853"/><path d="M12 12l5.600 3.200L12 25a13 13 0 0 0 11.250-19.500H12z" fill="#fbc116"/><path d="M12 5.500h11.250A13 13 0 0 0 .75 5.500L6.400 15.200z" fill="#e8453a"/><circle cx="12" cy="12" r="6" fill="#fff"/><circle cx="12" cy="12" r="4.700" fill="#4a8af0"/></g>
<g transform="translate(514.00 1008)"><rect width="24" height="24" rx="5.4" fill="url(#dg-blue)" /><rect x="3.600" y="7" width="16.800" height="10.600" rx="1.400" fill="#fff"/><path d="M4 7.600l8 6.200 8-6.200M4 17.200l5.800-5M20 17.200l-5.800-5" stroke="#b8c4d4" stroke-width=".9" fill="none"/></g>
<g transform="translate(545.70 1008)"><rect width="24" height="24" rx="5.4" fill="#b98a50" /><rect x="0" y="0" width="2.600" height="24" rx="1" fill="#9a6e3a"/><circle cx="12.600" cy="12" r="6.800" fill="#a67840"/><circle cx="12.600" cy="10" r="2.500" fill="#c29a62"/><path d="M8 16.400a4.800 4.200 0 0 1 9.200 0a6.800 6.800 0 0 1-9.200 0z" fill="#c29a62"/></g>
<g transform="translate(577.00 1008)"><rect width="24" height="24" rx="5.4" fill="#fbfbfb" /><path d="M0 5.400A5.400 5.400 0 0 1 5.400 0H18.600A5.400 5.400 0 0 1 24 5.400V7H0z" fill="#f0483e"/><text x="12" y="5.600" font-size="4.600" font-weight="bold" fill="#fff" text-anchor="middle" font-family="Liberation Sans, sans-serif">JUN</text><text x="12" y="20.400" font-size="14.500" fill="#3a3a3c" text-anchor="middle" font-family="Liberation Sans, sans-serif">25</text></g>
<g transform="translate(608.60 1008)"><rect width="24" height="24" rx="5.4" fill="#fbf8ee" /><path d="M0 5.400A5.400 5.400 0 0 1 5.400 0H18.600A5.400 5.400 0 0 1 24 5.400V7.600H0z" fill="#fcd242"/><path d="M0 7.600h24" stroke="#e8dcae" stroke-width=".6"/></g>
<g transform="translate(640.50 1008)"><rect width="24" height="24" rx="5.4" fill="#e9f0dc" /><path d="M12 0h6.600A5.400 5.400 0 0 1 24 5.400V12c-6 0-12-5-12-12z" fill="#8ed07c"/><path d="M14 0c0 6 5 10 10 10" stroke="#fff" stroke-width="1.600" fill="none"/><path d="M6 0v24" stroke="#f8d060" stroke-width="2.400"/><path d="M6 0v24" stroke="#fff" stroke-width=".6" stroke-dasharray="2 2"/><path d="M0 16h10" stroke="#f4b8b0" stroke-width="1.400"/><circle cx="6" cy="13.600" r="3" fill="#fff"/><circle cx="6" cy="13.600" r="2.100" fill="#2a86f0"/><rect x="14" y="17" width="7" height="5" rx="1.400" fill="#4a90e8"/><rect x="15" y="18.400" width="5" height="1.600" fill="#f0c040"/></g>
<g transform="translate(671.90 1008)"><rect width="24" height="24" rx="5.4" fill="url(#dg-green)" /><ellipse cx="12" cy="11.400" rx="7.800" ry="6.400" fill="#fff"/><path d="M7 15.600c0 2-1 3-2.400 3.600 2.400.2 4.400-.6 5.600-2.200z" fill="#fff"/><circle cx="21.5" cy="3" r="4.2" fill="#f03c38"/><text x="21.5" y="4.9" font-size="5.4" fill="#fff" text-anchor="middle" font-family="Liberation Sans, sans-serif">86</text></g>
<g transform="translate(703.40 1008)"><rect width="24" height="24" rx="5.4" fill="url(#dg-green)" /><rect x="4" y="7.600" width="11" height="8.800" rx="2.400" fill="#fff"/><path d="M15.800 11l4-2.800v7.600l-4-2.800z" fill="#fff"/></g>
<g transform="translate(735.00 1008)"><rect width="24" height="24" rx="5.4" fill="url(#dg-red)" /><rect x="3.400" y="5" width="8" height="13" rx="1" fill="#fff" transform="rotate(-10 7.400 11.500)"/><rect x="9.600" y="3.400" width="10.600" height="11.600" rx="1" fill="#fff"/><rect x="10.800" y="4.600" width="8.200" height="7.800" fill="#d8343a"/><circle cx="14.900" cy="7.600" r="1.700" fill="#fff"/><path d="M11.600 12.400a3.300 3 0 0 1 6.600 0z" fill="#fff"/><circle cx="18.600" cy="18.800" r="5.600" fill="#2a2a2e"/><circle cx="18.600" cy="18.800" r="3" fill="#4a4a52"/><circle cx="17.600" cy="17.800" r="1" fill="#8a8a96"/></g>
<g transform="translate(766.20 1008)"><rect width="24" height="24" rx="5.4" fill="#fbfbfb" /><ellipse cx="12" cy="6.800" rx="3" ry="4.600" fill="#f8a030" opacity=".88" transform="rotate(0 12 12)"/><ellipse cx="12" cy="6.800" rx="3" ry="4.600" fill="#f8d030" opacity=".88" transform="rotate(45 12 12)"/><ellipse cx="12" cy="6.800" rx="3" ry="4.600" fill="#a8d040" opacity=".88" transform="rotate(90 12 12)"/><ellipse cx="12" cy="6.800" rx="3" ry="4.600" fill="#40c080" opacity=".88" transform="rotate(135 12 12)"/><ellipse cx="12" cy="6.800" rx="3" ry="4.600" fill="#40a8e8" opacity=".88" transform="rotate(180 12 12)"/><ellipse cx="12" cy="6.800" rx="3" ry="4.600" fill="#6a70e0" opacity=".88" transform="rotate(225 12 12)"/><ellipse cx="12" cy="6.800" rx="3" ry="4.600" fill="#c060d0" opacity=".88" transform="rotate(270 12 12)"/><ellipse cx="12" cy="6.800" rx="3" ry="4.600" fill="#f05a6a" opacity=".88" transform="rotate(315 12 12)"/></g>
<g transform="translate(797.40 1008)"><g transform="rotate(-8 12 12)"><rect x="2.600" y="2" width="17" height="21.400" rx="1" fill="#fbfaf4" stroke="#d8d4c4" stroke-width=".5"/><rect x="2.600" y="2" width="17" height="2.600" fill="#f4a83a"/><rect x="4.600" y="6.600" width="8" height="5.600" fill="#4a9ae0"/><rect x="5.600" y="8.600" width="4" height="3.600" fill="#f0b840"/><path d="M4.600 14.400h13M4.600 16.400h13M4.600 18.400h13M4.600 20.400h9M14 7.400h3.600M14 9.400h3.600M14 11.400h3.600" stroke="#c4c0b4" stroke-width=".7"/></g><path d="M20.600 1.200l2.200 1-7.600 17.600-2.600 2 .4-3z" fill="#f0a030" stroke="#a86a1a" stroke-width=".5"/><path d="M12.600 21.800l.4-3 2.200 1z" fill="#3a3a3a"/></g>
<g transform="translate(828.80 1008)"><path d="M1 17.600h22v5.600H1z" fill="#f4f4f6" stroke="#c8c8d0" stroke-width=".5"/><rect x="3.400" y="13.400" width="4" height="8.400" fill="#e8473c"/><rect x="7.800" y="9" width="4" height="12.800" fill="#f49a2a"/><rect x="12.200" y="2.400" width="4" height="19.400" fill="#3cba54"/><rect x="16.600" y="6.800" width="4" height="15" fill="#3a98e8"/></g>
<g transform="translate(860.10 1008)"><path d="M2.400 2.400h19.200l-1.800 8.600H4.200z" fill="#2a88e8"/><path d="M2 2h20v1.400H2z" fill="#1a68c8"/><rect x="8" y="4.400" width="8" height="4.400" fill="#e8f0fa"/><circle cx="12" cy="6.600" r="1.500" fill="#f0a030"/><path d="M11.200 11h1.600v10h-1.600z" fill="#c8d4e4"/><ellipse cx="12" cy="22" rx="5.400" ry="1.600" fill="#d8e0ec"/></g>
<g transform="translate(891.60 1008)"><rect width="24" height="24" rx="5.4" fill="#fbfbfb" /><path d="M9.400 6.600l8-1.800v10.600a2.400 2 0 1 1-1.400-1.800V8l-5.200 1.200v7.600a2.400 2 0 1 1-1.400-1.800z" fill="url(#dg-music)"/></g>
<g transform="translate(923.10 1008)"><rect width="24" height="24" rx="5.4" fill="url(#dg-purple)" /><circle cx="12" cy="10.400" r="7" fill="none" stroke="#fff" stroke-width="1.300"/><circle cx="12" cy="10.400" r="4.200" fill="none" stroke="#fff" stroke-width="1.300"/><circle cx="12" cy="10.400" r="1.900" fill="#fff"/><path d="M10.400 14.400a1.600 1.600 0 0 1 3.200 0l-.5 6a1.100 1.100 0 0 1-2.200 0z" fill="#fff" stroke="#a050dc" stroke-width=".8"/></g>
<g transform="translate(954.60 1008)"><rect width="24" height="24" rx="5.4" fill="#141416" /><path d="M7.200 9.200c.5-.6.800-1.300.7-2-.7 0-1.400.4-1.900 1-.4.500-.800 1.200-.7 1.900.7.100 1.400-.3 1.900-.9zM8 10.400c-1 0-1.500.6-2.200.6s-1.400-.6-2.300-.6c-1.200 0-2.300 1-2.300 3 0 2 1.400 4.200 2.500 4.200.7 0 1-.5 2-.5s1.200.5 2 .5c1 0 1.800-1.400 2.200-2.400-1-.4-1.600-1.300-1.600-2.400 0-1 .5-1.700 1.300-2.200-.5-.600-1.100-.9-1.600-.9z" fill="#fff" transform="translate(1.500 0)"/><text x="17.200" y="17" font-size="10" font-weight="bold" fill="#fff" text-anchor="middle" font-family="Liberation Sans, sans-serif">tv</text></g>
<g transform="translate(986.10 1008)"><rect width="24" height="24" rx="5.4" fill="url(#dg-orange)" /><path d="M12 7.400c-2-1.600-5-2-7.600-1v11c2.600-1 5.600-.6 7.600 1 2-1.600 5-2 7.600-1v-11c-2.600-1-5.600-.6-7.600 1z" fill="#fff"/><path d="M12 7.400v11" stroke="#f4902a" stroke-width=".9"/></g>
<g transform="translate(1017.60 1008)"><rect width="24" height="24" rx="5.4" fill="url(#dg-blue)" /><path d="M13.200 5.200l-6.800 12M10.800 5.200l6.800 12M4.400 14h9M16.400 14h3.200" stroke="#fff" stroke-width="1.900" stroke-linecap="round" fill="none"/><circle cx="21.5" cy="3" r="4.2" fill="#f03c38"/><text x="21.5" y="4.9" font-size="5.4" fill="#fff" text-anchor="middle" font-family="Liberation Sans, sans-serif">10</text></g>
<g transform="translate(1049.10 1008)"><rect width="24" height="24" rx="5.4" fill="url(#dg-grey)" /><circle cx="12" cy="12" r="8.600" fill="#5a5a5e" stroke="#d0d0d4" stroke-width=".8"/><circle cx="12" cy="12" r="6.400" fill="none" stroke="#c4c4c8" stroke-width="1.400" stroke-dasharray="1.600 1.200"/><circle cx="12" cy="12" r="2" fill="#d0d0d4"/><path d="M12 12V4.600M12 12l6.400 3.700M12 12l-6.400 3.700" stroke="#d0d0d4" stroke-width="1.100"/><circle cx="21.5" cy="3" r="4.2" fill="#f03c38"/><text x="21.5" y="4.9" font-size="5.4" fill="#fff" text-anchor="middle" font-family="Liberation Sans, sans-serif">1</text></g>
<g transform="translate(1081.30 1008)"><text x="12" y="22.600" font-size="29" fill="#b4aed6" text-anchor="middle" font-family="Liberation Sans, sans-serif">?</text></g>
<g transform="translate(1112.10 1008)"><rect width="24" height="24" rx="5.4" fill="url(#dg-purple)" /><path d="M6.400 5.600h11.200a2 2 0 0 1 2 2v7a2 2 0 0 1-2 2H12l-3 2.800v-2.800H6.400a2 2 0 0 1-2-2v-7a2 2 0 0 1 2-2z" fill="#fff"/><text x="12" y="14.600" font-size="9" font-weight="bold" fill="#e8406a" text-anchor="middle" font-family="Liberation Sans, sans-serif">!</text></g>
<g transform="translate(1144.30 1008)"><rect x="-.5" y="-.5" width="25" height="25" rx="2.400" fill="#f6f6f4" transform="rotate(-12 12 12)"/><text x="12" y="18.200" font-size="17" fill="#2a2a2a" text-anchor="middle" font-family="Liberation Serif, serif">T</text></g>
<g transform="translate(1189.60 1008)"><rect width="24" height="24" rx="5.4" fill="#1c1c20" /><path d="M2 4h20M2 8h20M2 16h20M2 20h20" stroke="#34343c" stroke-width=".5"/><path d="M2.400 14l2.400-1.600 2 2 2.200-3.400 2 2.400 2.400-1 2-4.400 2 5.600 2-3.600 2.200 1.600" stroke="#a8b4c8" stroke-width="1.100" fill="none" stroke-linejoin="round"/><circle cx="15.400" cy="8" r="1" fill="#5ab0f0"/></g>
<circle cx="1201.6" cy="1038.800" r="1.600" fill="#0a0a14"/>
<g transform="translate(1221.40 1008)"><rect width="24" height="24" rx="5.4" fill="url(#dg-blue)" /><path d="M12 5.400l-6 11h12z" fill="none" stroke="#d8ecff" stroke-width="1.200" opacity=".7"/><rect x="3.600" y="17.600" width="16.800" height="2" fill="#d8ecff" opacity=".6"/><path d="M-1 5.600l8.600-6.200 1.400 2L.4 7.600z" fill="#e84a5a"/><path d="M19.400 1.200l3.600 2-11.400 21.200-3-1.800z" fill="#3a3a42"/><path d="M14.600-1.400l10 4.800-1.400 3.200-4-1.800-1.200 1.400-4.800-2.800z" fill="#55555e"/></g>
<circle cx="1233.4" cy="1038.800" r="1.600" fill="#0a0a14"/>
<g transform="translate(1252.90 1008)"><rect width="24" height="24" rx="5.4" fill="url(#dg-blue)" /><circle cx="11.600" cy="11.600" r="8.400" fill="#2a2c34"/><circle cx="11.600" cy="11.600" r="5" fill="#2e9cf4"/><path d="M14.600 14.800l5.600 6.400" stroke="#2a2c34" stroke-width="3.200" stroke-linecap="round"/><path d="M7.600 8.400a5.600 5.600 0 0 1 6-2" stroke="#7ac4fa" stroke-width="1.100" fill="none"/></g>
<g transform="translate(1298.30 1008)"><path d="M6 2.400h5v6H6z" fill="#f4f4f4"/><path d="M10.400 1h5v6h-5z" fill="#e0e0e4"/><path d="M13.600 3h4.400v5h-4.400z" fill="#c8503a"/><path d="M0 6.600a1.800 1.800 0 0 1 1.800-1.800h6.400l2 2.200h12a1.800 1.800 0 0 1 1.800 1.800V10H0z" fill="#4aa4e8"/><rect x="0" y="8.400" width="24" height="15" rx="1.800" fill="#62bcf6"/></g>
<g transform="translate(1330.40 1008)"><path d="M3 3.400h18l-2 19.400a1.600 1.600 0 0 1-1.600 1.400H6.600A1.600 1.600 0 0 1 5 22.800z" fill="url(#dg-trash)" opacity=".92"/><ellipse cx="12" cy="3.400" rx="9" ry="1.800" fill="#eeeef2" stroke="#c4c4cc" stroke-width=".5"/></g>
<path d="M1288.300 1006.500v31.200" stroke="#2e2e52" stroke-width="1.100" opacity=".85"/>
</svg>
</div>

<svg width="0" height="0" style="position:absolute">
<defs>
<symbol id="i-keyboard" viewBox="0 0 42.3 42.3"><rect x="6.750" y="12.500" width="29.200" height="17.300" rx="2.900" fill="none" stroke="#000" stroke-width="1.650"/><g fill="#000"><circle cx="11.200" cy="16.900" r="1.100"/><circle cx="15.200" cy="16.900" r="1.100"/><circle cx="19.200" cy="16.900" r="1.100"/><circle cx="23.200" cy="16.900" r="1.100"/><circle cx="27.200" cy="16.900" r="1.100"/><circle cx="31.200" cy="16.900" r="1.100"/><circle cx="11.200" cy="20.900" r="1.100"/><circle cx="15.200" cy="20.900" r="1.100"/><circle cx="19.200" cy="20.900" r="1.100"/><circle cx="23.200" cy="20.900" r="1.100"/><circle cx="27.200" cy="20.900" r="1.100"/><circle cx="31.200" cy="20.900" r="1.100"/><circle cx="11.200" cy="25" r="1.100"/><circle cx="31.200" cy="25" r="1.100"/><rect x="14.300" y="24.150" width="13.700" height="1.700" rx=".85"/></g></symbol>
<symbol id="i-hifispeaker" viewBox="0 0 42.3 42.3"><path fill="#000" fill-rule="evenodd" d="M13 6.400h16.400a2.500 2.500 0 0 1 2.500 2.500v24.300a2.500 2.500 0 0 1-2.500 2.500H13a2.500 2.500 0 0 1-2.500-2.500V8.900A2.500 2.500 0 0 1 13 6.400zM21.300 9.900a3.600 3.600 0 1 0 0 7.200a3.600 3.600 0 0 0 0-7.200zm0 1.500a2.100 2.100 0 1 1 0 4.200a2.100 2.100 0 0 1 0-4.200zM21.300 19.400a6.400 6.400 0 1 0 0 12.800a6.400 6.400 0 0 0 0-12.800zm0 3.800a2.600 2.600 0 1 1 0 5.200a2.600 2.600 0 0 1 0-5.200z"/></symbol>
<symbol id="i-printer" viewBox="0 0 42.3 42.3"><path fill="#000" fill-rule="evenodd" d="M14.400 8.100h14.800a1.500 1.500 0 0 1 1.500 1.500v1.200H12.900V9.600a1.500 1.500 0 0 1 1.500-1.500zM11 12.100h21.100a3.400 3.400 0 0 1 3.400 3.400v11a3.300 3.300 0 0 1-3.300 3.300h-1v3.200a1.500 1.500 0 0 1-1.500 1.500H14.100a1.500 1.500 0 0 1-1.500-1.500v-3.200h-1.700a3.300 3.300 0 0 1-3.300-3.300v-11a3.400 3.400 0 0 1 3.400-3.400zM29.300 15.300a1.600 1.600 0 1 0 0 3.200a1.600 1.600 0 0 0 0-3.200zM14.500 22.100v10.800h14.800V22.100zM16.900 24.550h10v1.300h-10zM16.900 28.850h10v1.300h-10z"/></symbol>
<symbol id="i-tv" viewBox="0 0 42.3 42.3"><rect x="6" y="8.950" width="31.050" height="20.800" rx="3" fill="#000"/><rect x="13.700" y="31.900" width="15.700" height="1.900" rx=".95" fill="#000"/></symbol>
<symbol id="i-desktop" viewBox="0 0 42.3 42.3"><path fill="#000" fill-rule="evenodd" d="M8.600 9.050h24.900a2.500 2.500 0 0 1 2.500 2.500v15a2.500 2.500 0 0 1-2.500 2.500h-9.100l1.100 3.050h1.200a.75.750 0 0 1 0 1.500H15.500a.75.750 0 0 1 0-1.500h1.200l1.100-3.050H8.600a2.500 2.500 0 0 1-2.500-2.500v-15a2.500 2.500 0 0 1 2.500-2.500zM8.900 10.700a.8.800 0 0 0-.8.800v12.100h25.900V11.500a.8.800 0 0 0-.8-.8zM21.050 25.900a1 1 0 1 0 0 2a1 1 0 0 0 0-2z"/></symbol>
<symbol id="i-headphones" viewBox="0 0 42.3 42.3"><path d="M9.200 27.900V22.400a12.250 12.250 0 0 1 24.500 0v5.500" fill="none" stroke="#000" stroke-width="1.850" stroke-linecap="round"/><rect x="11.900" y="23.100" width="5.100" height="10.200" rx="2" fill="#000"/><rect x="26.100" y="23.100" width="5.100" height="10.200" rx="2" fill="#000"/></symbol>
<symbol id="i-tvmusic" viewBox="0 0 42.3 42.3"><rect x="6.850" y="9.800" width="29.400" height="19.150" rx="2.700" fill="none" stroke="#000" stroke-width="1.750"/><rect x="13.700" y="32.100" width="15.700" height="1.900" rx=".95" fill="#000"/><ellipse cx="19.100" cy="23.500" rx="2.300" ry="1.800" transform="rotate(-20 19.100 23.500)" fill="#000"/><path d="M20.500 23.600V14.600l5.800-1.500v4.200l-4.500 1.100v5.200z" fill="#000"/></symbol>
<symbol id="i-mic" viewBox="0 0 42.3 42.3"><g fill="none" stroke="#000" stroke-width="1.700" stroke-linecap="round"><rect x="17.650" y="8.850" width="7.100" height="15.600" rx="3.550"/><path d="M12.900 18.300v2.200a8.300 8.300 0 0 0 16.600 0v-2.200M21.200 28.900v4.900M15.300 33.800h11.800"/></g></symbol>
<symbol id="i-plusbubble" viewBox="0 0 42.3 42.3"><g fill="none" stroke="#000" stroke-width="1.750" stroke-linecap="round" stroke-linejoin="round"><path d="M12.300 9.400h17.900a3.800 3.800 0 0 1 3.800 3.800v11.750a3.800 3.800 0 0 1-3.800 3.800H20.600l-4.600 4.300c-.8.700-1.600.5-1.600-.6v-3.700h-2.100a3.800 3.800 0 0 1-3.800-3.800V13.200a3.800 3.800 0 0 1 3.800-3.800z"/><path d="M15.700 19.500h11M21.200 14v11" stroke-width="1.800"/></g></symbol>
<symbol id="i-video" viewBox="0 0 42.3 42.3"><g fill="none" stroke="#000" stroke-width="1.750" stroke-linejoin="round"><rect x="7.150" y="11.750" width="20.600" height="19.100" rx="3.900"/><path d="M27.900 18.200l7.200-4.300c.7-.4 1.200-.1 1.200.7v13.400c0 .8-.5 1.100-1.200.7l-7.200-4.300"/></g></symbol>

</defs>
</svg>
</body>
</html>
